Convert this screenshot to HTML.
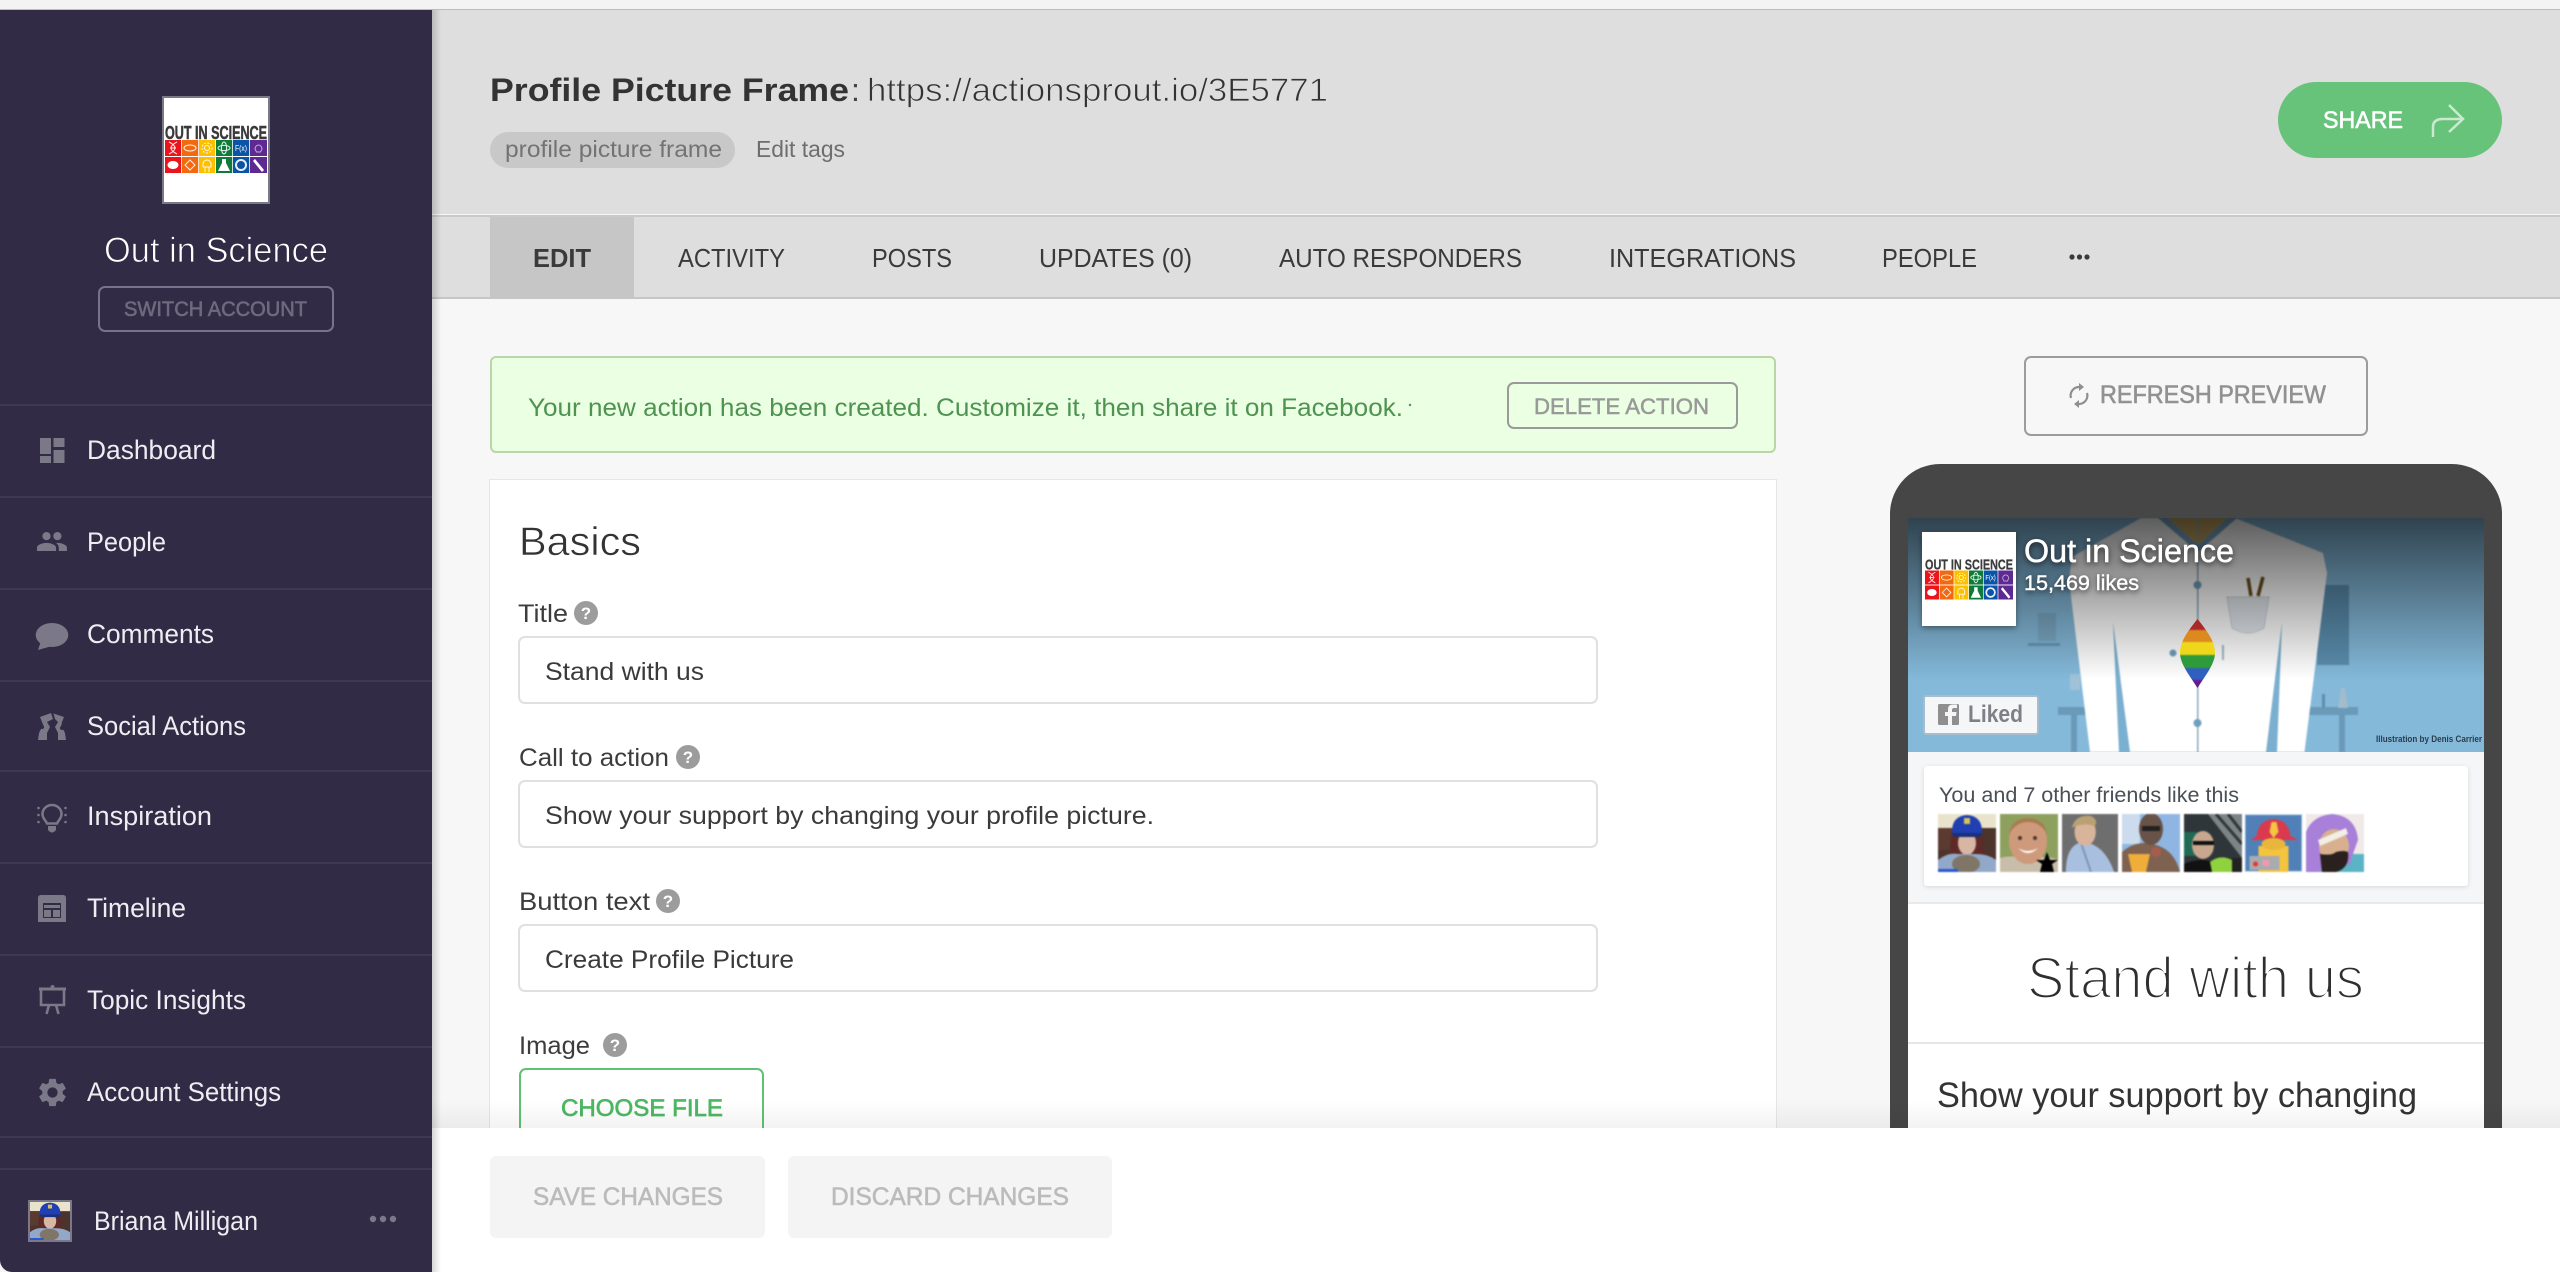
<!DOCTYPE html>
<html lang="en"><head><meta charset="utf-8"><title>Profile Picture Frame</title>
<style>
html,body{margin:0;padding:0;background:#f7f7f7;width:2560px;height:1272px;overflow:hidden}
svg{display:block}
text{font-family:"Liberation Sans",Arial,sans-serif}
.nav{font-size:27px;fill:#eeeef2}
.lab{font-size:25px;fill:#3c3c3c}
.inp{font-size:25px;fill:#3a3a3a}
.tab{font-size:26px;fill:#3a3a3a}
.q{font-size:17px;font-weight:bold;fill:#fff;text-anchor:middle}
.bl{filter:blur(.7px)}
</style></head><body>
<svg width="2560" height="1272" viewBox="0 0 2560 1272" xmlns="http://www.w3.org/2000/svg">
<defs>
<linearGradient id="sh" x1="0" x2="1" y1="0" y2="0"><stop offset="0" stop-color="#000" stop-opacity=".16"/><stop offset="1" stop-color="#000" stop-opacity="0"/></linearGradient>
<linearGradient id="fs" x1="0" x2="0" y1="0" y2="1"><stop offset="0" stop-color="#000" stop-opacity="0"/><stop offset="1" stop-color="#000" stop-opacity=".05"/></linearGradient>
<linearGradient id="cv" x1="0" x2="0" y1="0" y2="1"><stop offset="0" stop-color="#000" stop-opacity=".64"/><stop offset="1" stop-color="#000" stop-opacity="0"/></linearGradient>
<clipPath id="lens"><path d="M2197.5 619C2208 632 2215 642 2215 653C2215 664 2205 676 2197.5 688C2190 676 2180 664 2180 653C2180 642 2187 632 2197.5 619Z"/></clipPath>
<clipPath id="cvc"><rect x="1908" y="518" width="576" height="234"/></clipPath>
<symbol id="grid" viewBox="0 0 102 33" preserveAspectRatio="none">
<rect x="0" y="0" width="16.2" height="16" fill="#ea141c"/><rect x="17" y="0" width="16.2" height="16" fill="#f2690f"/><rect x="34" y="0" width="16.2" height="16" fill="#fdc000"/><rect x="51" y="0" width="16.2" height="16" fill="#0e7b3a"/><rect x="68" y="0" width="16.2" height="16" fill="#0a54a8"/><rect x="85" y="0" width="17" height="16" fill="#5e2a92"/>
<rect x="0" y="17" width="16.2" height="16" fill="#ea141c"/><rect x="17" y="17" width="16.2" height="16" fill="#f2690f"/><rect x="34" y="17" width="16.2" height="16" fill="#fdc000"/><rect x="51" y="17" width="16.2" height="16" fill="#0e7b3a"/><rect x="68" y="17" width="16.2" height="16" fill="#0a54a8"/><rect x="85" y="17" width="17" height="16" fill="#5e2a92"/>
<g fill="none" stroke="#fff" stroke-width="1" opacity=".9">
<path d="M4 2C12 6 12 10 4 14M12 2C4 6 4 10 12 14M5 8H11"/>
<ellipse cx="25" cy="8" rx="6" ry="3"/>
<circle cx="42" cy="8" r="2.500"/><circle cx="42" cy="8" r="5" stroke-dasharray="2 1.4"/>
<ellipse cx="59" cy="8" rx="6" ry="2.6"/><ellipse cx="59" cy="8" rx="2.6" ry="6"/>
<path d="M90 9A3.5 4 0 1 1 97 9L95.500 12H91.500Z" stroke="#cdb6e6"/>
<path d="M25 20L30 25L25 30L20 25Z"/>
<path d="M38 27V24A4 4 0 0 1 46 24V27H38M40 27V32M44 27V32"/>
<circle cx="76" cy="25" r="5" stroke-width="2"/>
</g>
<text x="70" y="11" font-size="8" fill="#fff" textLength="12" lengthAdjust="spacingAndGlyphs">F(x)</text>
<g fill="#fff">
<ellipse cx="8" cy="25" rx="5.500" ry="4"/>
<path d="M57 19H61V23L65 31H53L57 23Z"/>
<path d="M88 21L90 19L99 30L97 32Z"/>
</g>
</symbol>
<symbol id="av1" viewBox="0 0 58 58" preserveAspectRatio="none">
<rect width="58" height="58" fill="#4c332b"/><rect width="58" height="14" fill="#e9e3cb"/><rect x="0" y="14" width="14" height="22" fill="#5b3a30"/>
<path d="M14 18Q10 40 14 46H44Q48 36 42 18Z" fill="#5d2a27"/>
<ellipse cx="29" cy="29" rx="9" ry="12" fill="#d8b6a4"/>
<path d="M0 58V46Q10 38 20 40L38 40Q50 40 58 46V58Z" fill="#92a8c8"/>
<ellipse cx="28" cy="50" rx="14" ry="9" fill="#7f7668"/>
<path d="M14 20Q13 2 29 1Q45 2 44 20Z" fill="#1f3fb2"/><rect x="26" y="4" width="6" height="6" fill="#d9c05a"/><path d="M13 19H45L41 23H17Z" fill="#17307f"/>
<rect x="0" y="55" width="20" height="3" fill="#2a58d0"/>
</symbol>
<symbol id="av2" viewBox="0 0 58 58" preserveAspectRatio="none">
<rect width="58" height="58" fill="#8ea05e"/><path d="M0 58V44Q14 40 28 46Q46 40 58 46V58Z" fill="#c8bda8"/>
<ellipse cx="28" cy="27" rx="19" ry="23" fill="#cf9a7c"/><path d="M9 20Q12 4 28 4Q44 4 47 20Q40 8 28 8Q16 8 9 20Z" fill="#a87c50"/>
<path d="M18 34Q28 44 38 34Q28 40 18 34Z" fill="#fff"/><circle cx="20" cy="24" r="2" fill="#4a3a30"/><circle cx="35" cy="24" r="2" fill="#4a3a30"/>
<path d="M47 38L50 46H58L52 50L54 58H40L42 50L36 46H44Z" fill="#000"/>
</symbol>
<symbol id="av3" viewBox="0 0 58 58" preserveAspectRatio="none">
<rect width="58" height="58" fill="#6f6e6e"/><path d="M4 58Q4 30 22 28Q44 30 54 58Z" fill="#a8bfdf"/><path d="M20 30L30 58" stroke="#7d95b8" stroke-width="2"/>
<ellipse cx="24" cy="18" rx="11" ry="14" fill="#d8b49b"/><path d="M10 14Q14 0 30 2Q38 6 34 12Q22 8 10 14Z" fill="#b9a173"/>
</symbol>
<symbol id="av4" viewBox="0 0 58 58" preserveAspectRatio="none">
<rect width="58" height="58" fill="#8fb6e2"/><rect x="0" y="0" width="18" height="30" fill="#ccdcee"/>
<path d="M0 58V38Q14 26 30 30Q52 34 58 58Z" fill="#7f6150"/><ellipse cx="29" cy="15" rx="12" ry="16" fill="#675347"/><rect x="20" y="12" width="18" height="5" fill="#23201f"/>
<path d="M6 40H28L24 58H10Z" fill="#efae3a"/><circle cx="34" cy="38" r="5" fill="#a65d4e"/>
</symbol>
<symbol id="av5" viewBox="0 0 58 58" preserveAspectRatio="none">
<rect width="58" height="58" fill="#2f3639"/><path d="M24 0L58 44V0Z" fill="#7c8486"/><path d="M32 0L58 30M44 0L58 18" stroke="#30383a" stroke-width="3"/>
<rect x="0" y="18" width="14" height="24" fill="#1f6a55"/>
<ellipse cx="19" cy="31" rx="11" ry="14" fill="#c9a78f"/><rect x="9" y="27" width="21" height="4" fill="#111"/>
<path d="M0 58V50Q18 42 32 50V58Z" fill="#111"/><path d="M26 48Q36 40 48 46L50 58H28Z" fill="#8fd13f"/><rect x="48" y="44" width="10" height="14" fill="#222"/>
</symbol>
<symbol id="av6" viewBox="0 0 58 58" preserveAspectRatio="none">
<rect width="58" height="58" fill="#cfe3f4"/><rect x="1" y="1" width="56" height="56" fill="#5180b9"/>
<path d="M14 58V32H44V58Z" fill="#f4c43f"/><path d="M12 22Q14 6 29 5Q44 6 46 22L54 26H6Z" fill="#d93a4d"/><path d="M27 8H32L34 18L29 24L25 18Z" fill="#f5c542"/>
<ellipse cx="29" cy="30" rx="12" ry="6" fill="#e8b63a"/>
<rect x="5" y="42" width="30" height="14" fill="#a9abae"/><circle cx="11" cy="50" r="2.5" fill="#e33"/><rect x="18" y="46" width="7" height="6" fill="#ee9ab0"/>
</symbol>
<symbol id="av7" viewBox="0 0 58 58" preserveAspectRatio="none">
<rect width="58" height="58" fill="#5ab4c6"/><rect width="58" height="40" fill="#efe9e8"/><path d="M0 58V18Q6 2 26 0Q50 2 52 26Q46 42 44 50L10 58Z" fill="#a87fd9"/>
<ellipse cx="28" cy="32" rx="15" ry="17" fill="#d9b08f"/><path d="M12 26L40 14L42 20L14 32Z" fill="#f1efe6"/>
<path d="M14 40Q26 42 30 38Q38 36 42 38Q44 54 30 58H16Z" fill="#2a211e"/>
</symbol>
</defs>

<!-- top strip -->
<rect x="0" y="0" width="2560" height="9" fill="#f3f3f3"/><rect x="0" y="9" width="2560" height="1" fill="#bcbcbc"/>
<!-- content -->
<rect x="432" y="10" width="2128" height="1262" fill="#f7f7f7"/>
<!-- header -->
<rect x="432" y="10" width="2128" height="204" fill="#dedede"/>
<rect x="432" y="215" width="2128" height="82" fill="#dedede"/>
<rect x="432" y="215" width="2128" height="2" fill="#c9c9c9"/>
<rect x="432" y="297" width="2128" height="2" fill="#c6c6c6"/>
<text x="490" y="101" font-size="32" font-weight="bold" fill="#333" textLength="359" lengthAdjust="spacingAndGlyphs">Profile Picture Frame</text>
<text x="851" y="101" font-size="32" fill="#444">:</text>
<text x="867" y="101" font-size="32" fill="#333" stroke="#dedede" stroke-width=".8" textLength="461" lengthAdjust="spacingAndGlyphs">https://actionsprout.io/3E5771</text>
<rect x="490" y="132" width="245" height="36" rx="18" fill="#c8c8c8"/>
<text x="505" y="157" font-size="23" fill="#737373" textLength="217" lengthAdjust="spacingAndGlyphs">profile picture frame</text>
<text x="756" y="157" font-size="23" fill="#6e6e6e" textLength="89" lengthAdjust="spacingAndGlyphs">Edit tags</text>
<rect x="2278" y="82" width="224" height="76" rx="38" fill="#68c37a"/>
<text x="2323" y="128" font-size="24" fill="#fff" stroke="#fff" stroke-width=".6" textLength="80" lengthAdjust="spacingAndGlyphs">SHARE</text>
<path d="M2433 137V127Q2433 119 2443 119H2463M2449 105L2463 119L2449 132" fill="none" stroke="#fff" stroke-opacity=".65" stroke-width="2.500"/>
<!-- tabs -->
<rect x="490" y="217" width="144" height="80" fill="#c6c6c6"/>
<text x="533" y="267" font-size="26" font-weight="bold" fill="#3a3a3a" textLength="58" lengthAdjust="spacingAndGlyphs">EDIT</text>
<text class="tab" x="678" y="267" textLength="107" lengthAdjust="spacingAndGlyphs">ACTIVITY</text>
<text class="tab" x="872" y="267" textLength="80" lengthAdjust="spacingAndGlyphs">POSTS</text>
<text class="tab" x="1039" y="267" textLength="153" lengthAdjust="spacingAndGlyphs">UPDATES (0)</text>
<text class="tab" x="1279" y="267" textLength="243" lengthAdjust="spacingAndGlyphs">AUTO RESPONDERS</text>
<text class="tab" x="1609" y="267" textLength="187" lengthAdjust="spacingAndGlyphs">INTEGRATIONS</text>
<text class="tab" x="1882" y="267" textLength="95" lengthAdjust="spacingAndGlyphs">PEOPLE</text>
<g fill="#3a3a3a"><circle cx="2072" cy="257" r="2.600"/><circle cx="2079.500" cy="257" r="2.600"/><circle cx="2087" cy="257" r="2.600"/></g>

<!-- alert -->
<rect x="491" y="357" width="1284" height="95" rx="5" fill="#ebffe2" stroke="#b8d6a6" stroke-width="2"/>
<text x="528" y="416" font-size="25" fill="#4e9352" textLength="875" lengthAdjust="spacingAndGlyphs">Your new action has been created. Customize it, then share it on Facebook.</text>
<circle cx="1410" cy="405" r="1.200" fill="#4e9352"/>
<rect x="1508" y="383" width="229" height="45" rx="6" fill="none" stroke="#9a9a9a" stroke-width="2"/>
<text x="1534" y="414" font-size="22" fill="#999" stroke="#999" stroke-width=".5" textLength="175" lengthAdjust="spacingAndGlyphs">DELETE ACTION</text>

<!-- card -->
<rect x="489" y="479" width="1288" height="660" fill="#e6e6e6"/>
<rect x="490" y="480" width="1286" height="660" fill="#fff"/>
<text x="519" y="555" font-size="40" fill="#333" stroke="#fff" stroke-width=".6" textLength="122" lengthAdjust="spacingAndGlyphs">Basics</text>

<text class="lab" x="518" y="622" textLength="50" lengthAdjust="spacingAndGlyphs">Title</text>
<circle cx="586" cy="613" r="12" fill="#9c9c9c"/><text class="q" x="586" y="619">?</text>
<rect x="519" y="637" width="1078" height="66" rx="6" fill="#fff" stroke="#e0e0e0" stroke-width="2"/>
<text class="inp" x="545" y="680" textLength="159" lengthAdjust="spacingAndGlyphs">Stand with us</text>

<text class="lab" x="519" y="766" textLength="150" lengthAdjust="spacingAndGlyphs">Call to action</text>
<circle cx="688" cy="757" r="12" fill="#9c9c9c"/><text class="q" x="688" y="763">?</text>
<rect x="519" y="781" width="1078" height="66" rx="6" fill="#fff" stroke="#e0e0e0" stroke-width="2"/>
<text class="inp" x="545" y="824" textLength="609" lengthAdjust="spacingAndGlyphs">Show your support by changing your profile picture.</text>

<text class="lab" x="519" y="910" textLength="131" lengthAdjust="spacingAndGlyphs">Button text</text>
<circle cx="668" cy="901" r="12" fill="#9c9c9c"/><text class="q" x="668" y="907">?</text>
<rect x="519" y="925" width="1078" height="66" rx="6" fill="#fff" stroke="#e0e0e0" stroke-width="2"/>
<text class="inp" x="545" y="968" textLength="249" lengthAdjust="spacingAndGlyphs">Create Profile Picture</text>

<text class="lab" x="519" y="1054" textLength="71" lengthAdjust="spacingAndGlyphs">Image</text>
<circle cx="615" cy="1045" r="12" fill="#9c9c9c"/><text class="q" x="615" y="1051">?</text>
<rect x="520" y="1069" width="243" height="80" rx="6" fill="#fff" stroke="#5fc272" stroke-width="2"/>
<text x="561" y="1116" font-size="24" fill="#4db863" textLength="162" lengthAdjust="spacingAndGlyphs" stroke="#4db863" stroke-width=".7">CHOOSE FILE</text>

<!-- refresh -->
<rect x="2025" y="357" width="342" height="78" rx="6" fill="none" stroke="#9c9c9c" stroke-width="2"/>
<path d="M2071 398A8.500 8.500 0 0 1 2079 387M2087 393A8.500 8.500 0 0 1 2079 404" fill="none" stroke="#8f8f8f" stroke-width="2.200"/>
<path d="M2079 383V391L2084 387ZM2079 400V408L2074 404Z" fill="#8f8f8f"/>
<text x="2100" y="403" font-size="25" fill="#919191" textLength="226" lengthAdjust="spacingAndGlyphs" stroke="#919191" stroke-width=".6">REFRESH PREVIEW</text>

<!-- phone -->
<path d="M1890 1140V514A50 50 0 0 1 1940 464H2452A50 50 0 0 1 2502 514V1140Z" fill="#464646"/>
<g clip-path="url(#cvc)">
<rect x="1908" y="518" width="576" height="234" fill="#84b9da"/>
<!-- illustration -->
<g class="bl">
<rect x="2317" y="585" width="32" height="80" fill="#5b8eae"/>
<rect x="2038" y="613" width="18" height="28" fill="#7ca9c4"/><rect x="2028" y="643" width="32" height="3" fill="#6a98b6"/>
<rect x="2058" y="707" width="300" height="8" fill="#6a9ab8"/>
<rect x="2071" y="715" width="6" height="37" fill="#6a9ab8"/><rect x="2339" y="715" width="6" height="37" fill="#6a9ab8"/>
<path d="M2338 708L2341 688H2345L2348 708Z" fill="#a2bccc"/><rect x="2322" y="694" width="3" height="14" fill="#5f8fac"/>
<rect x="2070" y="674" width="10" height="16" fill="#9fc2d8"/>
<path d="M2141 518L2072 557L2069 580L2090 752H2304.500L2327 573L2323 553L2235 518Z" fill="#fff"/>
<path d="M2168 518L2198 545L2227 518Z" fill="#c6a35e"/>
<path d="M2158 518H2168L2198 545V552ZM2237 518H2227L2198 545V552Z" fill="#7aa7c6"/>
<path d="M2113 622L2130 752H2119ZM2282 622L2266 752H2277Z" fill="#7aafd0"/>
<rect x="2197" y="518" width="1.500" height="234" fill="#8aa8bb"/>
<circle cx="2197.500" cy="585" r="4" fill="#6f9fbd"/><circle cx="2197.500" cy="723" r="4" fill="#6f9fbd"/><circle cx="2173" cy="653" r="3.500" fill="#6f9fbd"/>
<path d="M2227 597H2269L2264 628Q2248 638 2232 628Z" fill="#e4e9ee" stroke="#c8d2d9"/>
<path d="M2248 578L2251 596M2263 577L2258 596" stroke="#6a4f18" stroke-width="3.500"/>
<rect x="2222" y="645" width="2" height="15" fill="#9db9cb"/>
</g>
<!-- overlay -->
<rect x="1908" y="518" width="576" height="162" fill="url(#cv)"/>
<!-- rainbow -->
<g clip-path="url(#lens)" class="bl">
<rect x="2178" y="617" width="40" height="13" fill="#ab2829"/><rect x="2178" y="630" width="40" height="12" fill="#dc8a1f"/><rect x="2178" y="642" width="40" height="13" fill="#efd81c"/><rect x="2178" y="655" width="40" height="13" fill="#2f9a3a"/><rect x="2178" y="668" width="40" height="12" fill="#2f5fc0"/><rect x="2178" y="680" width="40" height="10" fill="#6a1a8a"/>
</g>
</g>
<text x="2376" y="742" font-size="9.500" font-weight="bold" fill="#2a3d4a" textLength="106" lengthAdjust="spacingAndGlyphs">Illustration by Denis Carrier</text>
<!-- profile pic in cover -->
<rect x="1922" y="532" width="94" height="94" fill="#fff" style="filter:drop-shadow(0 2px 3px rgba(0,0,0,.4))"/>
<text x="1925" y="569.500" font-size="15" font-weight="bold" fill="#3c3c3c" stroke="#3c3c3c" stroke-width=".3" textLength="88" lengthAdjust="spacingAndGlyphs">OUT IN SCIENCE</text>
<use href="#grid" x="1925" y="570.500" width="88" height="29"/>
<g style="filter:drop-shadow(0 2px 3px rgba(0,0,0,.65))" fill="#fff">
<text x="2024" y="562" font-size="32" textLength="210" lengthAdjust="spacingAndGlyphs" stroke="#fff" stroke-width=".5">Out in Science</text>
<text x="2024" y="590" font-size="21" textLength="115" lengthAdjust="spacingAndGlyphs" stroke="#fff" stroke-width=".4">15,469 likes</text>
</g>
<rect x="1924" y="696" width="114" height="38" rx="2" fill="#f5f6f7" stroke="#a9bccb" stroke-width="2"/>
<rect x="1938" y="704" width="21" height="21" rx="1.500" fill="#8f8f8f"/>
<path d="M1952 725V716H1956L1956.500 712H1952V710Q1952 708 1954 708H1957V704.500H1953Q1948 704.500 1948 709V712H1945V716H1948V725Z" fill="#f5f6f7"/>
<text x="1968" y="722" font-size="24" font-weight="bold" fill="#7e8087" textLength="55" lengthAdjust="spacingAndGlyphs">Liked</text>
<!-- likes -->
<rect x="1908" y="752" width="576" height="150" fill="#f5f6f7"/>
<rect x="1924" y="766" width="544" height="120" rx="3" fill="#fff" style="filter:drop-shadow(0 1px 2px rgba(0,0,0,.12))"/>
<text x="1939" y="802" font-size="21" fill="#4b4f56" textLength="300" lengthAdjust="spacingAndGlyphs">You and 7 other friends like this</text>
<use class="bl" href="#av1" x="1938" y="814" width="58" height="58"/>
<use class="bl" href="#av2" x="2000" y="814" width="58" height="58"/>
<use class="bl" href="#av3" x="2062" y="814" width="56" height="58"/>
<use class="bl" href="#av4" x="2122" y="814" width="58" height="58"/>
<use class="bl" href="#av5" x="2184" y="814" width="58" height="58"/>
<use class="bl" href="#av6" x="2244.500" y="814" width="58" height="58"/>
<use class="bl" href="#av7" x="2306" y="814" width="58" height="58"/>
<rect x="1908" y="902" width="576" height="240" fill="#fff"/><rect x="1908" y="902" width="576" height="2" fill="#e9e9e9"/>
<text x="2027" y="998" font-size="58" fill="#2f2f2f" stroke="#fff" stroke-width="2.200" textLength="337" lengthAdjust="spacingAndGlyphs">Stand with us</text>
<rect x="1908" y="1042" width="576" height="2" fill="#e6e6e6"/>
<text x="1937" y="1107" font-size="35" fill="#333" textLength="480" lengthAdjust="spacingAndGlyphs">Show your support by changing</text>

<!-- footer -->
<rect x="432" y="1100" width="2128" height="28" fill="url(#fs)"/>
<rect x="432" y="1128" width="2128" height="144" fill="#fff"/>
<rect x="490" y="1156" width="275" height="82" rx="6" fill="#f4f4f4"/>
<text x="533" y="1205" font-size="25" fill="#bbb" textLength="190" lengthAdjust="spacingAndGlyphs" stroke="#bbb" stroke-width=".6">SAVE CHANGES</text>
<rect x="788" y="1156" width="324" height="82" rx="6" fill="#f4f4f4"/>
<text x="831" y="1205" font-size="25" fill="#bbb" textLength="238" lengthAdjust="spacingAndGlyphs" stroke="#bbb" stroke-width=".6">DISCARD CHANGES</text>

<!-- sidebar -->
<rect x="0" y="1250" width="30" height="22" fill="#f4f4f4"/>
<path d="M0 10H432V1272H12A12 12 0 0 1 0 1260Z" fill="#312b45"/>
<rect x="432" y="10" width="9" height="1262" fill="url(#sh)"/>
<rect x="162" y="96" width="108" height="108" fill="#7b7888"/><rect x="164" y="98" width="104" height="104" fill="#fff"/>
<text x="165" y="139" font-size="18" font-weight="bold" fill="#3a3a3a" stroke="#3a3a3a" stroke-width=".5" textLength="102" lengthAdjust="spacingAndGlyphs">OUT IN SCIENCE</text>
<use href="#grid" x="165" y="140" width="102" height="33"/>
<text x="104" y="262" font-size="35" fill="#fff" stroke="#312b45" stroke-width=".8" textLength="224" lengthAdjust="spacingAndGlyphs">Out in Science</text>
<rect x="99" y="287" width="234" height="44" rx="6" fill="none" stroke="#77748a" stroke-width="2"/>
<text x="124" y="316" font-size="21" fill="#6d6a7e" textLength="183" lengthAdjust="spacingAndGlyphs" stroke="#6d6a7e" stroke-width=".6">SWITCH ACCOUNT</text>
<g fill="#3e3952">
<rect x="0" y="404" width="432" height="2"/><rect x="0" y="496" width="432" height="2"/><rect x="0" y="588" width="432" height="2"/><rect x="0" y="680" width="432" height="2"/><rect x="0" y="770" width="432" height="2"/><rect x="0" y="862" width="432" height="2"/><rect x="0" y="954" width="432" height="2"/><rect x="0" y="1046" width="432" height="2"/><rect x="0" y="1136" width="432" height="2"/><rect x="0" y="1168" width="432" height="2"/>
</g>
<text class="nav" x="87" y="459" textLength="129" lengthAdjust="spacingAndGlyphs">Dashboard</text>
<text class="nav" x="87" y="551" textLength="79" lengthAdjust="spacingAndGlyphs">People</text>
<text class="nav" x="87" y="643" textLength="127" lengthAdjust="spacingAndGlyphs">Comments</text>
<text class="nav" x="87" y="735" textLength="159" lengthAdjust="spacingAndGlyphs">Social Actions</text>
<text class="nav" x="87" y="825" textLength="125" lengthAdjust="spacingAndGlyphs">Inspiration</text>
<text class="nav" x="87" y="917" textLength="99" lengthAdjust="spacingAndGlyphs">Timeline</text>
<text class="nav" x="87" y="1009" textLength="159" lengthAdjust="spacingAndGlyphs">Topic Insights</text>
<text class="nav" x="87" y="1101" textLength="194" lengthAdjust="spacingAndGlyphs">Account Settings</text>
<text class="nav" x="94" y="1230" textLength="164" lengthAdjust="spacingAndGlyphs">Briana Milligan</text>
<!-- icons -->
<g fill="#7b7888">
<rect x="40" y="438" width="11" height="16"/><rect x="53.500" y="438" width="11" height="9"/><rect x="53.500" y="450" width="11" height="13"/><rect x="40" y="456" width="11" height="7"/>
<path transform="translate(35.640 525.200) scale(1.360)" d="M16 11c1.660 0 2.990-1.340 2.990-3S17.660 5 16 5c-1.660 0-3 1.340-3 3s1.340 3 3 3zm-8 0c1.660 0 2.990-1.340 2.990-3S9.660 5 8 5C6.340 5 5 6.340 5 8s1.340 3 3 3zm0 2c-2.330 0-7 1.170-7 3.500V19h14v-2.500c0-2.330-4.670-3.500-7-3.500zm8 0c-.290 0-.620.020-.970.050 1.160.840 1.970 1.970 1.970 3.450V19h6v-2.500c0-2.330-4.670-3.500-7-3.500z"/>
<ellipse cx="52" cy="635" rx="16.300" ry="12"/><path d="M41 641L38 650L52 646Z"/>
<path d="M40 717L51 713L53 719L47 722L50 727L47 733V740H38L39 733L41 729L44 727L42 722Z"/>
<path d="M64 717L53.500 713.500L55 719L58 722L55 727L58 733V740H66L65 733L63 729L61 727L62 722Z"/>
<path d="M48 826H56V830Q52 835 48 830Z"/>
<circle cx="38.500" cy="808" r="1.300"/><circle cx="38.500" cy="815" r="1.300"/><circle cx="38.500" cy="822" r="1.300"/><circle cx="65.500" cy="808" r="1.300"/><circle cx="65.500" cy="815" r="1.300"/><circle cx="65.500" cy="822" r="1.300"/>
<path fill-rule="evenodd" d="M41 895H63Q66 895 66 898V922H38V898Q38 895 41 895ZM43 903V918H61V903Z"/>
<rect x="44" y="905" width="16" height="3"/><rect x="44" y="910" width="7" height="7"/><rect x="53" y="910" width="7" height="7"/>
<rect x="39" y="987.500" width="27" height="3"/><circle cx="52.500" cy="987" r="2"/>
<path transform="translate(35.460 1075.460) scale(1.420)" d="M19.140 12.940c.040-.300.060-.610.060-.940 0-.320-.020-.640-.070-.940l2.030-1.580c.180-.140.230-.410.120-.610l-1.920-3.320c-.120-.220-.370-.290-.590-.220l-2.390.960c-.500-.380-1.030-.700-1.620-.940l-.360-2.540c-.040-.240-.240-.410-.480-.410h-3.840c-.240 0-.430.170-.470.410l-.360 2.540c-.590.240-1.130.570-1.620.940l-2.390-.960c-.220-.080-.470 0-.590.220L2.740 8.870c-.120.210-.080.470.120.610l2.030 1.580c-.050.300-.090.630-.090.940s.020.640.070.940l-2.030 1.580c-.180.140-.230.410-.120.610l1.920 3.320c.120.220.370.290.590.220l2.390-.960c.500.380 1.030.700 1.620.940l.360 2.540c.050.240.240.410.480.410h3.840c.240 0 .440-.170.470-.410l.360-2.540c.590-.240 1.130-.560 1.620-.940l2.390.960c.220.080.470 0 .590-.220l1.920-3.320c.120-.220.070-.470-.120-.610l-2.010-1.580zM12 15.600c-1.980 0-3.600-1.620-3.600-3.600s1.620-3.600 3.600-3.600 3.600 1.620 3.600 3.600-1.620 3.600-3.600 3.600z"/>
<circle cx="373" cy="1219" r="3.200"/><circle cx="383" cy="1219" r="3.200"/><circle cx="393" cy="1219" r="3.200"/>
</g>
<circle cx="42" cy="727" r="2" fill="#312b45"/><circle cx="62" cy="728" r="2" fill="#312b45"/>
<path d="M47 823.500C45 819 42.500 818.500 42.500 814A9.500 9 0 0 1 61.500 814C61.500 818.500 59 819 57 823.500Z" fill="none" stroke="#7b7888" stroke-width="2.500"/>
<path d="M41 990V1005H64V990M49 1005L46.500 1014M56 1005L58.500 1014" fill="none" stroke="#7b7888" stroke-width="2.600"/>
<rect x="28" y="1200" width="44" height="42" fill="#7b7888"/>
<use href="#av1" x="30" y="1202" width="40" height="38"/>
</svg>
</body></html>
